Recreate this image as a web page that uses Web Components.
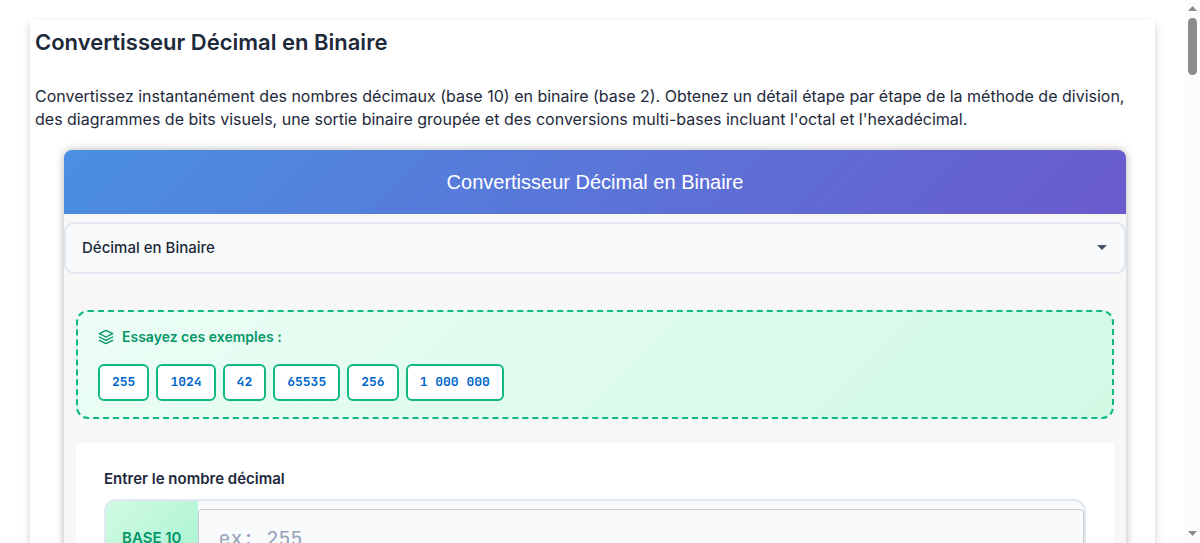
<!DOCTYPE html>
<html lang="fr">
<head>
<meta charset="utf-8">
<meta name="viewport" content="width=device-width, initial-scale=1">
<title>Convertisseur Décimal en Binaire</title>
<style>
  body { margin: 0; background: #fff; color: #1e293b; font: 16px/23px Inter, "Noto Sans", sans-serif; }
</style>
</head>
<body>
<app-shell>
  <page-card>
    <h1 slot="title">Convertisseur Décimal en Binaire</h1>
    <p slot="intro">Convertissez instantanément des nombres décimaux (base 10) en binaire (base 2). Obtenez un détail étape par étape de la méthode de division, des diagrammes de bits visuels, une sortie binaire groupée et des conversions multi-bases incluant l'octal et l'hexadécimal.</p>
    <converter-panel heading="Convertisseur Décimal en Binaire">
      <mode-select>Décimal en Binaire</mode-select>
      <example-box label="Essayez ces exemples :">
        <example-chip>255</example-chip>
        <example-chip>1024</example-chip>
        <example-chip>42</example-chip>
        <example-chip>65535</example-chip>
        <example-chip>256</example-chip>
        <example-chip>1 000 000</example-chip>
      </example-box>
      <number-field label="Entrer le nombre décimal" base="BASE 10" hint="ex: 255"></number-field>
    </converter-panel>
  </page-card>
</app-shell>
<script>
  class BaseElement extends HTMLElement {
    constructor() {
      super();
      this.attachShadow({ mode: 'open' });
    }
    connectedCallback() {
      this.shadowRoot.innerHTML = '<style>*{box-sizing:border-box}</style>' + this.render();
    }
  }

  customElements.define('app-shell', class extends BaseElement {
    render() {
      return `<style>
        :host { display: grid; grid-template-columns: minmax(0, 1fr) 15px; height: 100vh; overflow: hidden; }
        main { overflow: hidden; padding: 20px 30px; }
      </style>
      <main><slot></slot></main>
      <scroll-track></scroll-track>`;
    }
  });

  customElements.define('scroll-track', class extends BaseElement {
    render() {
      return `<style>
        :host { display: flex; flex-direction: column; align-items: center; background: #fcfcfc; }
        svg { display: block; width: 15px; height: 18px; fill: #8b8b8b; }
        .thumb { width: 9px; height: 57px; border-radius: 5px; background: #8b8b8b; }
        .rest { flex: 1; }
      </style>
      <svg viewBox="0 0 15 18" aria-hidden="true"><path d="M7.5 6 12 11H3z"/></svg>
      <div class="thumb"></div>
      <div class="rest"></div>
      <svg viewBox="0 0 15 18" aria-hidden="true"><path d="M3 6h9l-4.500 5z"/></svg>`;
    }
  });

  customElements.define('page-card', class extends BaseElement {
    render() {
      return `<style>
        :host { display: block; padding: 5px; background: #fff; box-shadow: 0 4px 8px rgba(0,0,0,.2); }
        ::slotted(h1) { margin: 0 0 26px; font-size: 22px; line-height: 34px; font-weight: 600; }
        ::slotted(p) { margin: 0; }
        .body { margin: 19px 24px 0 29px; }
      </style>
      <slot name="title"></slot>
      <slot name="intro"></slot>
      <div class="body"><slot></slot></div>`;
    }
  });

  customElements.define('converter-panel', class extends BaseElement {
    render() {
      return `<style>
        :host { display: block; border-radius: 8px; background: #f7f7f7; box-shadow: 0 0 8px rgba(0,0,0,.3); overflow: hidden; }
        header { padding: 16px; text-align: center; color: #fff; font: 20px/32px "Liberation Sans", Arial, sans-serif;
          background: linear-gradient(135deg, #4a90e2, #6a5acd); }
      </style>
      <header>${this.getAttribute('heading')}</header>
      <slot></slot>`;
    }
  });

  customElements.define('mode-select', class extends BaseElement {
    render() {
      return `<style>
        :host { display: grid; align-items: center; margin: 8px 0 36px; }
        select, svg { grid-area: 1 / 1; }
        select { appearance: none; width: 100%; height: 52px; padding: 0 16px; border: 2px solid #e2e8f0; border-radius: 10px;
          background: #f8fafc; color: #1e293b; font: 500 15px/20px Inter, sans-serif; }
        svg { justify-self: end; width: 10px; height: 6px; margin-right: 19px; fill: #475569; pointer-events: none; }
      </style>
      <select aria-label="Type de conversion"><option>${this.textContent}</option></select>
      <svg viewBox="0 0 10 6" aria-hidden="true"><path d="M0 0h10L5 5z"/></svg>`;
    }
  });

  customElements.define('example-box', class extends BaseElement {
    render() {
      return `<style>
        :host { display: block; margin: 0 12px 24px; padding: 16px 20px; border: 2px dashed #10b981; border-radius: 12px;
          background: linear-gradient(135deg, #ecfdf5, #d1fae5); }
        .label { display: flex; align-items: center; gap: 8px; margin-bottom: 18px; color: #059669; font-weight: 600; font-size: 14px; line-height: 18px; }
        svg { width: 16px; height: 16px; fill: none; stroke: currentColor; stroke-width: 2; stroke-linecap: round; stroke-linejoin: round; }
        .chips { display: flex; flex-wrap: wrap; gap: 7px; }
      </style>
      <div class="label">
        <svg viewBox="0 0 24 24" aria-hidden="true"><path d="M12 2 2 7l10 5 10-5-10-5z"/><path d="m2 17 10 5 10-5"/><path d="m2 12 10 5 10-5"/></svg>
        <span>${this.getAttribute('label')}</span>
      </div>
      <div class="chips"><slot></slot></div>`;
    }
  });

  customElements.define('example-chip', class extends BaseElement {
    render() {
      return `<style>
        :host { display: block; }
        button { display: block; padding: 8px 12px 9px; border: 2px solid #10b981; border-radius: 6px; background: #fff; color: #0066cc;
          font: 600 13px/16px "JetBrains Mono", "Liberation Mono", monospace; }
      </style>
      <button type="button"><slot></slot></button>`;
    }
  });

  customElements.define('number-field', class extends BaseElement {
    render() {
      return `<style>
        :host { display: block; margin: 0 12px; padding: 24px 28px; background: #fff; }
        label { display: block; margin-bottom: 9px; font-weight: 600; font-size: 15px; line-height: 23px; }
        .group { display: flex; border: 2px solid #e2e8f0; border-radius: 12px; background: #f8fafc; overflow: hidden; }
        .base { display: flex; align-items: center; padding: 0 16px; color: #059669; font-weight: 600; font-size: 15px; line-height: 20px;
          background: linear-gradient(135deg, #d1fae5, #a7f3d0); }
        input { flex: 1; min-width: 0; height: 58px; margin: 8px 0; padding: 0 20px; border: 1px solid #ccc; border-radius: 4px;
          background: #f8fafc; color: #1e293b; font: 20px/24px "JetBrains Mono", "Liberation Mono", monospace; }
        input::placeholder { color: #94a3b8; }
      </style>
      <label for="value">${this.getAttribute('label')}</label>
      <div class="group">
        <span class="base">${this.getAttribute('base')}</span>
        <input id="value" type="text" inputmode="numeric" placeholder="${this.getAttribute('hint')}">
      </div>`;
    }
  });
</script>
</body>
</html>
